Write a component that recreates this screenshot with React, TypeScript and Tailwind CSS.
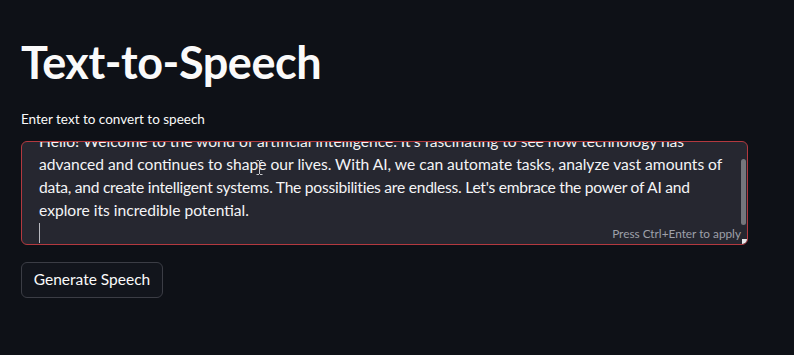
import React from "react";

const lines: { text: string; cls: string }[] = [
  { text: "Hello! Welcome to the world of artificial intelligence. It's fascinating to see how technology has", cls: "tracking-normal" },
  { text: "advanced and continues to shape our lives. With AI, we can automate tasks, analyze vast amounts of", cls: "tracking-normal" },
  { text: "data, and create intelligent systems. The possibilities are endless. Let's embrace the power of AI and", cls: "tracking-[-0.25px]" },
  { text: "explore its incredible potential.", cls: "tracking-normal" },
];

export default function App() {
  return (
    <div
      className="flex min-h-[355px] w-full flex-col items-start bg-[#0e1117] pl-[21px] pt-[35px] text-[#fafafa]"
      style={{ fontFamily: "Lato, 'Noto Sans', sans-serif" }}
    >
      <h1 className="m-0 text-[45px] leading-[54px] font-bold tracking-[-0.45px]">Text-to-Speech</h1>
      <div className="mt-[21px] text-[13.5px] leading-[18px] text-[#fafafa]">Enter text to convert to speech</div>
      <div className="relative mt-[13px] h-[104px] w-[727px] overflow-hidden rounded-[6px] border border-[#b3393f] bg-[#262730]">
        <div className="-mt-[12px] flex flex-col pl-[17px] text-[15.6px] leading-[23px] text-[#f4f4f6]">
          {lines.map((l, i) => (
            <div key={i} className={"whitespace-nowrap " + l.cls}>{l.text}</div>
          ))}
          <div className="h-[23px]" />
        </div>
        <div className="absolute left-[17px] top-[81px] h-[20px] w-px bg-[#b8b9c0]" />
        <div className="absolute right-[1px] top-[17px] h-[66px] w-[5px] rounded-full bg-[#75767c]" />
        <div className="absolute bottom-[3px] right-[6px] text-[11.8px] leading-[14px] text-[#9ea0aa]">
          Press Ctrl+Enter to apply
        </div>
        <div className="absolute bottom-0 right-0 h-[5px] w-[5px] bg-[#e8e8ea]" />
        <svg className="absolute left-[234px] top-[18px]" width="7" height="15" viewBox="0 0 7 15">
          <path d="M0.5 0.5h2.5M4 0.5h2.5M3.5 1v13M0.5 14.5h2.5M4 14.5h2.5" stroke="#c8c8cc" strokeWidth="1" fill="none" />
        </svg>
      </div>
      <button className="mt-[17px] h-[36px] w-[142px] rounded-[6px] border border-[#3b3d45] bg-[#12151c] text-[15.5px] text-[#fafafa]">
        Generate Speech
      </button>
    </div>
  );
}
